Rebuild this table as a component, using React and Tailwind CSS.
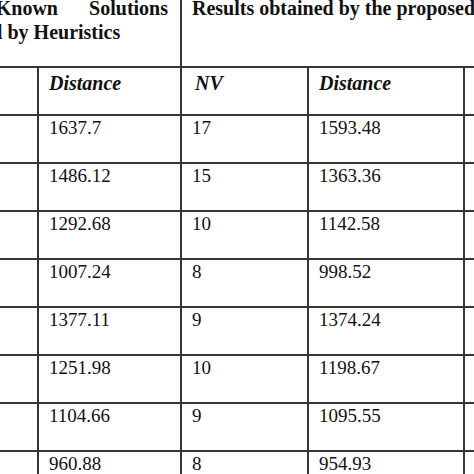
import React from "react";

const rows = [
  ["1637.7", "17", "1593.48"],
  ["1486.12", "15", "1363.36"],
  ["1292.68", "10", "1142.58"],
  ["1007.24", "8", "998.52"],
  ["1377.11", "9", "1374.24"],
  ["1251.98", "10", "1198.67"],
  ["1104.66", "9", "1095.55"],
  ["960.88", "8", "954.93"],
];

const cell = "border-2 border-[#353535] align-top px-[10px]";

const App = () => {
  return (
    <div className="w-[474px] h-[474px] overflow-hidden bg-white text-[#111] [font-family:'Liberation_Serif','Times_New_Roman',serif]">
      <table className="table-fixed border-collapse w-[689px] -ml-[86px] -mt-[10px]">
        <colgroup>
          <col className="w-[123px]" />
          <col className="w-[143px]" />
          <col className="w-[127px]" />
          <col className="w-[156px]" />
          <col className="w-[140px]" />
        </colgroup>
        <thead>
          {/* group headings */}
          <tr className="h-[76px]">
            <th colSpan={2} className={`${cell} pl-[12px] pr-[12px] pt-[4px] text-[20px] leading-[24px] font-bold text-justify`}>
              Best Known Solutions obtained by Heuristics
            </th>
            <th colSpan={3} className={`${cell} pl-[10px] pt-[4px] text-[20px] leading-[24px] font-bold text-left whitespace-nowrap`}>
              Results obtained by the proposed approach
            </th>
          </tr>
          <tr className="h-[48px]">
            <th className={`${cell} pt-[3px] text-[20px] leading-[24px] font-bold italic text-left`}>NV</th>
            <th className={`${cell} pt-[3px] text-[20px] leading-[24px] font-bold italic text-left`}>Distance</th>
            <th className={`${cell} pl-[13px] pt-[3px] text-[20px] leading-[24px] font-bold italic text-left`}>NV</th>
            <th className={`${cell} pt-[3px] text-[20px] leading-[24px] font-bold italic text-left`}>Distance</th>
            <th className={`${cell}`}></th>
          </tr>
        </thead>
        <tbody>
          {rows.map((r, i) => (
            <tr key={i} className="h-[48px]">
              <td className={cell}></td>
              <td className={`${cell} pt-[1px] text-[19px] leading-[21px]`}>{r[0]}</td>
              <td className={`${cell} pt-[1px] text-[19px] leading-[21px]`}>{r[1]}</td>
              <td className={`${cell} pt-[1px] text-[19px] leading-[21px]`}>{r[2]}</td>
              <td className={cell}></td>
            </tr>
          ))}
        </tbody>
      </table>
    </div>
  );
};

export default App;
